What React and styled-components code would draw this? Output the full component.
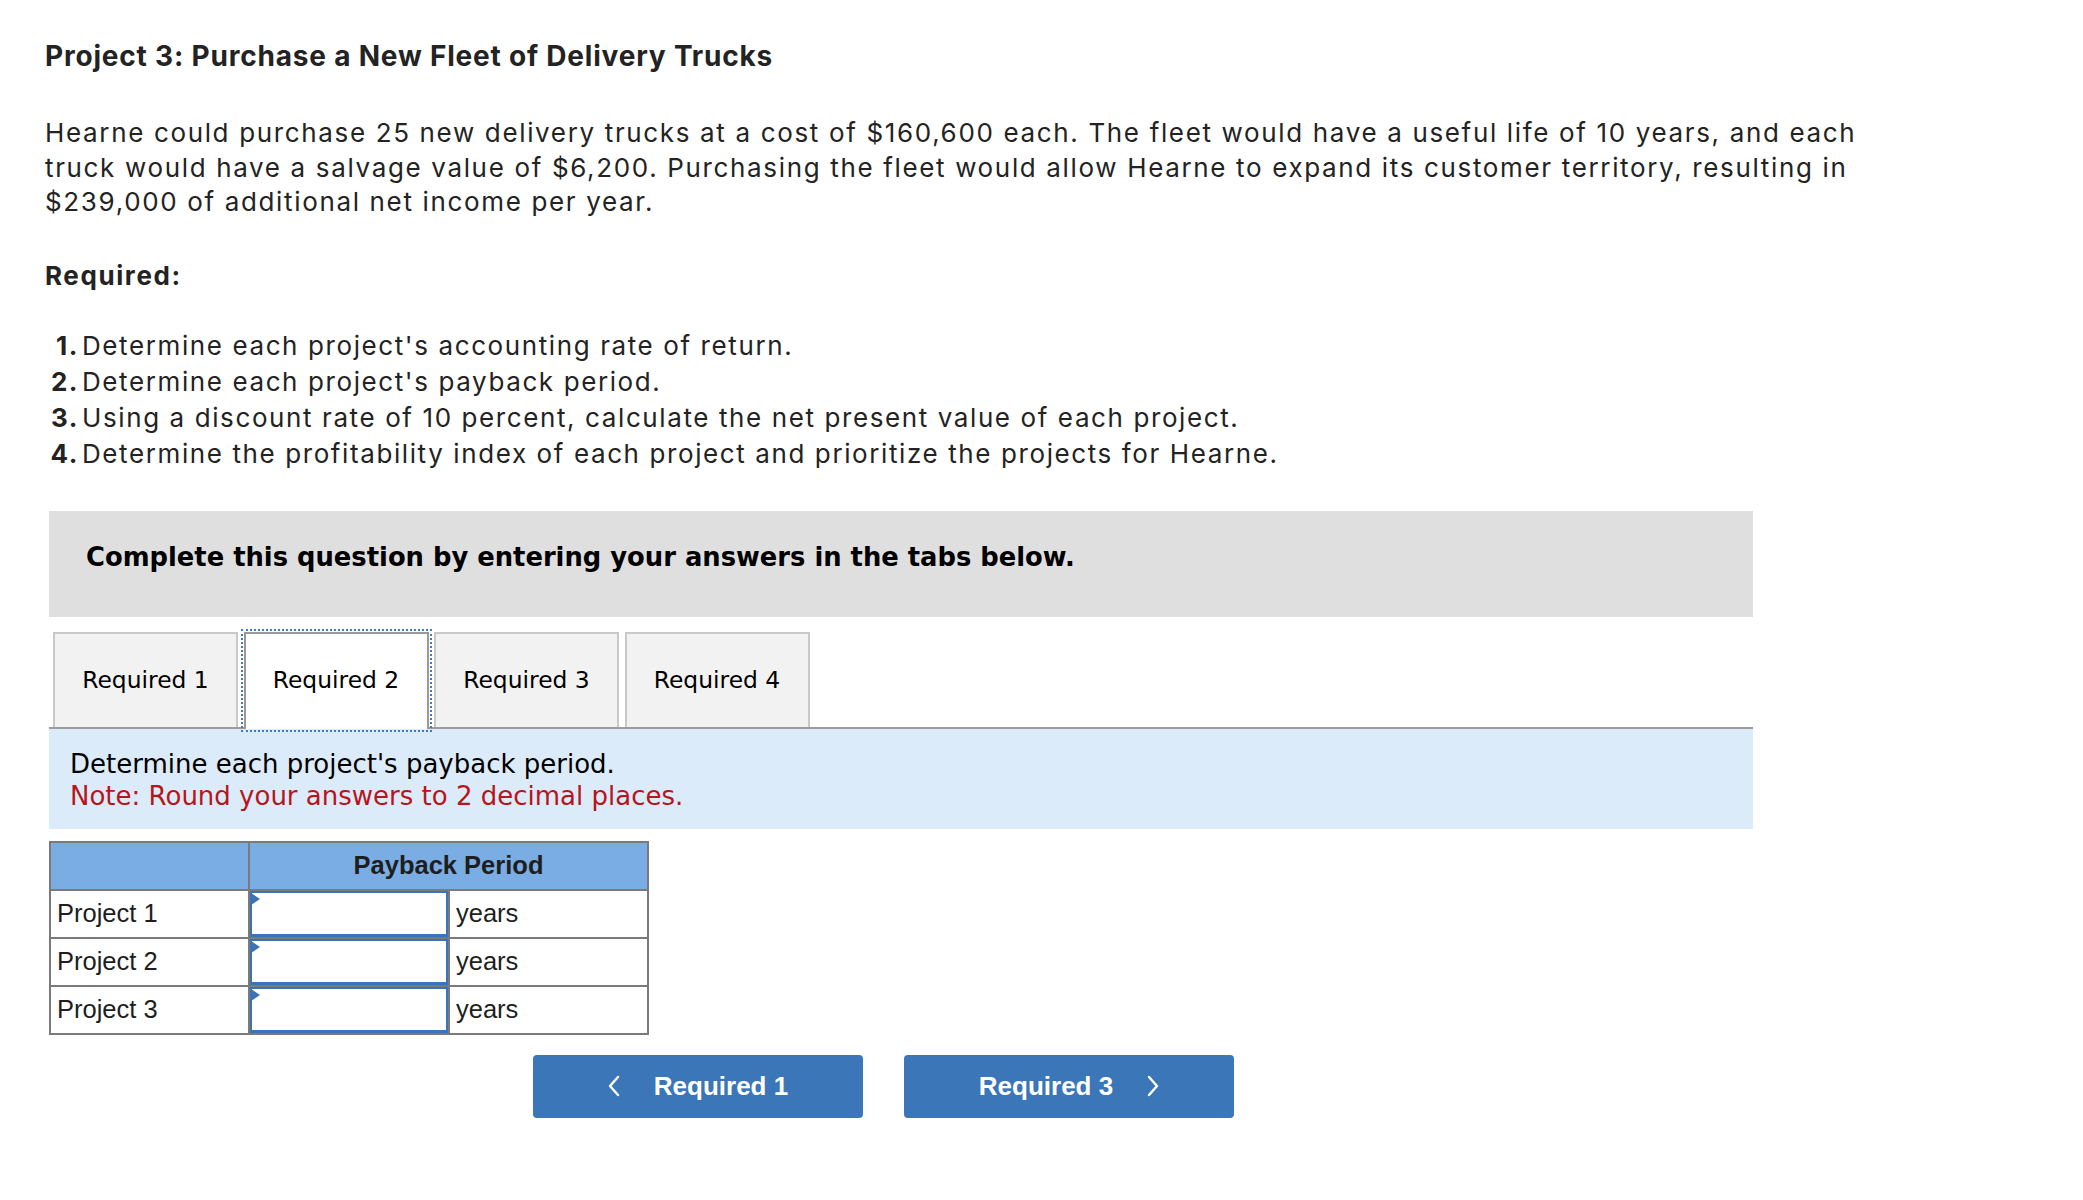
import React from 'react';
import styled, { createGlobalStyle, css } from 'styled-components';

const GlobalStyle = createGlobalStyle`
  html, body {
    margin: 0;
    padding: 0;
    background: #fff;
  }
`;

const Page = styled.div`
  padding: 38px 0 60px 45px;
  font-family: Inter, "Open Sans", sans-serif;
  color: #232323;
`;

const Title = styled.h1`
  margin: 0;
  font-size: 28px;
  line-height: 36px;
  font-weight: 700;
  letter-spacing: 0.8px;
`;

const Intro = styled.p`
  margin: 42px 0 0;
  font-size: 26px;
  line-height: 34.6px;
  letter-spacing: 1.65px;
`;

const Heading = styled.h2`
  margin: 38px 0 0;
  font-size: 26px;
  line-height: 36px;
  font-weight: 700;
  letter-spacing: 1.6px;
`;

const Steps = styled.div`
  margin-top: 34px;
  display: grid;
  grid-template-columns: 34px auto;
  column-gap: 3px;
  font-size: 26px;
  line-height: 36px;
  letter-spacing: 1.6px;
`;

const StepNum = styled.span`
  font-weight: 700;
  justify-self: end;
  letter-spacing: 1.5px;
`;

const Answer = styled.section`
  margin: 39px 0 0 4px;
  width: 1704px;
  font-family: "DejaVu Sans", Verdana, sans-serif;
  color: #000;
`;

const Banner = styled.div`
  box-sizing: border-box;
  height: 106px;
  padding: 31px 0 0 37px;
  background: #dfdfdf;
  font-size: 25.8px;
  line-height: 31px;
  font-weight: 700;
`;

const TabRow = styled.div`
  margin-top: 15px;
  display: flex;
  gap: 5.5px;
  padding-left: 4px;
  border-bottom: 2px solid #9c9c9c;
`;

const Tab = styled.div`
  box-sizing: border-box;
  width: 185px;
  height: 95px;
  display: flex;
  align-items: center;
  justify-content: center;
  border: 2px solid #c9c9c9;
  border-bottom: none;
  background: #f2f2f2;
  font-size: 23.4px;
  ${p => p.$active && css`
    position: relative;
    height: 97px;
    margin-bottom: -2px;
    padding-bottom: 2px;
    background: #fff;
    border-color: #999;
    outline: 2px dotted #3c7bc6;
    outline-offset: 1px;
  `}
`;

const Prompt = styled.div`
  padding: 19px 21px 17px;
  background: #dcebf9;
  font-size: 26px;
  line-height: 32px;
`;

const Note = styled.div`
  color: #b8141b;
`;

const Grid = styled.table`
  margin-top: 12px;
  border-collapse: collapse;
  font-family: "Liberation Sans", Arial, sans-serif;
  font-size: 25.5px;
  color: #1e1e1e;
`;

const HeadCell = styled.th`
  height: 46px;
  padding: 0;
  border: 2px solid #7a7a7a;
  background: #7aade3;
  font-weight: 700;
  text-align: center;
  width: ${p => p.$w}px;
`;

const Cell = styled.td`
  height: 46px;
  padding: 0 6px;
  border: 2px solid #7a7a7a;
  text-align: left;
`;

const InputCell = styled.td`
  height: 46px;
  padding: 0;
  border: 2px solid #7a7a7a;
`;

const InputWrap = styled.div`
  position: relative;
  height: 46px;
`;

const Flag = styled.span`
  position: absolute;
  top: 2px;
  left: 1px;
  width: 0;
  height: 0;
  border-top: 6px solid transparent;
  border-bottom: 6px solid transparent;
  border-left: 9px solid #3b73b9;
`;

const Field = styled.input`
  box-sizing: border-box;
  width: 100%;
  height: 100%;
  margin: 0;
  border: 2px solid #3b73b9;
  border-bottom-width: 3px;
  background: #fff;
  font: inherit;
  outline: none;
`;

const Nav = styled.div`
  margin-top: 20px;
  padding-left: 484px;
  display: flex;
  gap: 41px;
`;

const NavButton = styled.button`
  width: 330px;
  height: 63px;
  display: flex;
  align-items: center;
  justify-content: center;
  gap: 34px;
  border: none;
  border-radius: 4px;
  background: #3b76b9;
  color: #fff;
  font-family: "Liberation Sans", Arial, sans-serif;
  font-size: 26px;
  font-weight: 700;
  cursor: pointer;
`;

const Chevron = ({ dir }) => (
  <svg width="12" height="22" viewBox="0 0 12 22" fill="none">
    <polyline
      points={dir === 'left' ? '10,2 2,11 10,20' : '2,2 10,11 2,20'}
      stroke="#fff"
      strokeWidth="2.4"
      strokeLinecap="round"
      strokeLinejoin="round"
    />
  </svg>
);

const steps = [
  "Determine each project's accounting rate of return.",
  "Determine each project's payback period.",
  'Using a discount rate of 10 percent, calculate the net present value of each project.',
  'Determine the profitability index of each project and prioritize the projects for Hearne.',
];

const tabs = ['Required 1', 'Required 2', 'Required 3', 'Required 4'];
const projects = ['Project 1', 'Project 2', 'Project 3'];

export default function App() {
  return (
    <>
      <GlobalStyle />
      <Page>
        <Title>Project 3: Purchase a New Fleet of Delivery Trucks</Title>
        <Intro>
          Hearne could purchase 25 new delivery trucks at a cost of $160,600 each. The fleet would have a useful life of 10 years, and each
          <br />
          truck would have a salvage value of $6,200. Purchasing the fleet would allow Hearne to expand its customer territory, resulting in
          <br />
          $239,000 of additional net income per year.
        </Intro>
        <Heading>Required:</Heading>
        <Steps>
          {steps.map((s, i) => (
            <React.Fragment key={i}>
              <StepNum>{i + 1}.</StepNum>
              <span>{s}</span>
            </React.Fragment>
          ))}
        </Steps>

        <Answer>
          <Banner>Complete this question by entering your answers in the tabs below.</Banner>
          <TabRow>
            {tabs.map(t => (
              <Tab key={t} $active={t === 'Required 2'}>{t}</Tab>
            ))}
          </TabRow>
          <Prompt>
            Determine each project's payback period.
            <Note>Note: Round your answers to 2 decimal places.</Note>
          </Prompt>

          <Grid>
            <thead>
              <tr>
                <HeadCell $w={197} />
                <HeadCell colSpan={2}>Payback Period</HeadCell>
              </tr>
            </thead>
            <tbody>
              {projects.map(p => (
                <tr key={p}>
                  <Cell style={{ width: 185 }}>{p}</Cell>
                  <InputCell style={{ width: 198 }}>
                    <InputWrap>
                      <Field type="text" aria-label={p} />
                      <Flag />
                    </InputWrap>
                  </InputCell>
                  <Cell style={{ width: 185 }}>years</Cell>
                </tr>
              ))}
            </tbody>
          </Grid>

          <Nav>
            <NavButton>
              <Chevron dir="left" />
              <span>Required 1</span>
            </NavButton>
            <NavButton>
              <span>Required 3</span>
              <Chevron dir="right" />
            </NavButton>
          </Nav>
        </Answer>
      </Page>
    </>
  );
}
